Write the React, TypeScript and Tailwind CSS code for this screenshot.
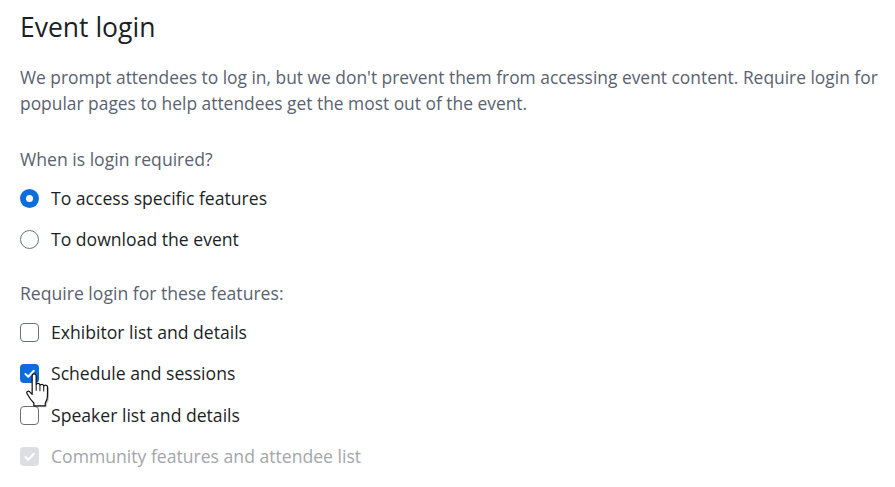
import React from "react";

const Check = ({ color }: { color: string }) => (
  <svg viewBox="0 0 20 20" className="w-[15px] h-[15px]" fill="none">
    <path d="M4.5 10.5l3.8 3.8 7.4-8" stroke={color} strokeWidth="2.6" strokeLinecap="round" strokeLinejoin="round" />
  </svg>
);

const handPath =
  "M6.5 2.6a1.8 1.8 0 0 1 3.6 0V10.6a1.8 1.8 0 0 1 3.4 0v0.8a1.8 1.8 0 0 1 3.4 0v0.8a1.8 1.8 0 0 1 3.4 0v8.3c0 3-1 5-2 6.5V29.5H8v-2.5c-2-2-4.2-5-6.2-8.6c-0.8-1.5 1-2.8 2.3-1.7L6.5 19.2Z";

const HandCursor = () => (
  <svg width="28" height="35" viewBox="0 0 23.5 31.5" className="absolute left-[24px] top-[373px]">
    <path d={handPath} transform="translate(1.3 1.3)" fill="#000" opacity="0.22" />
    <path d={handPath} fill="#ffffff" stroke="#111" strokeWidth="1.1" strokeLinejoin="round" />
    <path d="M10.1 11v5M13.5 11.8v4.6M16.9 12.6v4" stroke="#111" strokeWidth="0.9" />
  </svg>
);

const body = "text-[17.6px]";

export default function App() {
  return (
    <div
      className="relative w-[895px] h-[487px] bg-white pl-[20px] pr-[6px] pt-[10px]"
      style={{ fontFamily: "'Open Sans', 'Noto Sans', sans-serif" }}
    >
      <h1 className="text-[26.5px] leading-[34px] text-[#1c1f26] font-normal">Event login</h1>
      <p className="mt-[20px] text-[17.4px] leading-[26px] text-[#5a6270]">
        We prompt attendees to log in, but we don't prevent them from accessing event content. Require login for popular pages to help attendees get the most out of the event.
      </p>
      <div className={`mt-[31px] ${body} leading-[24px] text-[#5a6270]`}>When is login required?</div>
      <div className="mt-[15px] flex flex-col gap-[17px]">
        <label className="flex items-center gap-[12px] h-[24px]">
          <span className="w-[19px] h-[19px] rounded-full bg-[#0b6cdb] flex items-center justify-center">
            <span className="w-[7px] h-[7px] rounded-full bg-white" />
          </span>
          <span className={`${body} text-[#1c1f26]`}>To access specific features</span>
        </label>
        <label className="flex items-center gap-[12px] h-[24px]">
          <span className="w-[19px] h-[19px] rounded-full border-[1.5px] border-[#6b7079] bg-white" />
          <span className={`${body} text-[#1c1f26]`}>To download the event</span>
        </label>
      </div>
      <div className={`mt-[30px] ${body} leading-[24px] text-[#5a6270]`}>Require login for these features:</div>
      <div className="mt-[15px] flex flex-col gap-[17.5px]">
        <label className="flex items-center gap-[12px] h-[24px]">
          <span className="w-[19px] h-[19px] rounded-[4px] border-[1.5px] border-[#6b7079] bg-white" />
          <span className={`${body} text-[#1c1f26]`}>Exhibitor list and details</span>
        </label>
        <label className="flex items-center gap-[12px] h-[24px]">
          <span className="w-[19px] h-[19px] rounded-[4px] bg-[#0b6cdb] flex items-center justify-center">
            <Check color="#ffffff" />
          </span>
          <span className={`${body} text-[#1c1f26]`}>Schedule and sessions</span>
        </label>
        <label className="flex items-center gap-[12px] h-[24px]">
          <span className="w-[19px] h-[19px] rounded-[4px] border-[1.5px] border-[#6b7079] bg-white" />
          <span className={`${body} text-[#1c1f26]`}>Speaker list and details</span>
        </label>
        <label className="flex items-center gap-[12px] h-[24px]">
          <span className="w-[19px] h-[19px] rounded-[4px] bg-[#dcdee2] flex items-center justify-center">
            <Check color="#ffffff" />
          </span>
          <span className={`${body} text-[#a3a6ab]`}>Community features and attendee list</span>
        </label>
      </div>
      <HandCursor />
    </div>
  );
}
